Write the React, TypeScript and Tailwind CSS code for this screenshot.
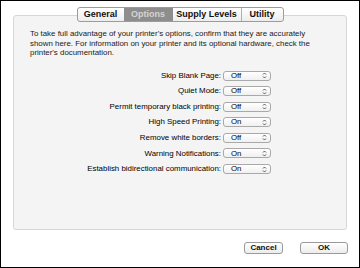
import React from 'react';

const options: { label: string; value: string }[] = [
  { label: 'Skip Blank Page:', value: 'Off' },
  { label: 'Quiet Mode:', value: 'Off' },
  { label: 'Permit temporary black printing:', value: 'Off' },
  { label: 'High Speed Printing:', value: 'On' },
  { label: 'Remove white borders:', value: 'Off' },
  { label: 'Warning Notifications:', value: 'On' },
  { label: 'Establish bidirectional communication:', value: 'On' },
];

const tabs = ['General', 'Options', 'Supply Levels', 'Utility'];

const Popup = ({ value }: { value: string }) => (
  <div className="w-[48px] h-[10px] flex items-center justify-between pl-[7px] pr-[3px] rounded-[3px] border border-[#a9a9a9] bg-gradient-to-b from-white to-[#f0f0f0] text-[7.8px] leading-none text-black">
    <span>{value}</span>
    <svg width="5" height="7" viewBox="0 0 5 7">
      <path d="M1 2.5 L2.5 1 L4 2.5" stroke="#444" strokeWidth="0.9" fill="none" />
      <path d="M1 4.5 L2.5 6 L4 4.5" stroke="#444" strokeWidth="0.9" fill="none" />
    </svg>
  </div>
);

const App = () => {
  return (
    <div
      className="w-[360px] h-[268px] border border-black bg-white flex flex-col"
      style={{ fontFamily: '"Liberation Sans", Arial, sans-serif' }}
    >
      <div className="mx-[12px] mt-[14px] h-[215px] rounded-[3px] border border-[#d6d6d6] bg-[#f4f4f4] flex flex-col">
        {/* tab strip */}
        <div className="-mt-[9px] flex justify-center">
          <div className="flex h-[15px] rounded-[3px] border border-[#9c9c9c] bg-gradient-to-b from-white to-[#ededed] overflow-hidden">
            {tabs.map((t, i) => (
              <div
                key={t}
                className={
                  t === 'Options'
                    ? 'h-full flex items-center justify-center w-[49px] bg-[#8d8d8d] text-[#d4d4d4] text-[9px] font-semibold'
                    : i === 0
                    ? 'h-full flex items-center justify-center w-[46px] text-[9px] font-semibold text-[#111]'
                    : t === 'Supply Levels'
                    ? 'h-full flex items-center justify-center w-[69px] border-r border-[#b0b0b0] text-[9px] font-semibold text-[#111]'
                    : 'h-full flex items-center justify-center w-[41px] text-[9px] font-semibold text-[#111]'
                }
              >
                {t}
              </div>
            ))}
          </div>
        </div>

        <p className="mt-[7px] ml-[16px] w-[292px] text-[7.9px] leading-[9.5px] text-[#1a1a1a]">
          To take full advantage of your printer's options, confirm that they are accurately shown here. For
          information on your printer and its optional hardware, check the printer's documentation.
        </p>

        <div className="mt-[13px] flex flex-col gap-[5.6px]">
          {options.map((o) => (
            <div key={o.label} className="flex items-center h-[10px]">
              <div className="w-[209px] text-right pr-[2px] text-[7.9px] leading-none text-black">
                {o.label}
              </div>
              <Popup value={o.value} />
            </div>
          ))}
        </div>
      </div>

      <div className="mt-[12px] flex justify-end gap-[17px] pr-[11px]">
        <button className="w-[39px] h-[12px] rounded-[3px] border border-[#9a9a9a] bg-gradient-to-b from-white to-[#ececec] text-[8px] leading-none font-semibold text-[#111]">
          Cancel
        </button>
        <button className="w-[48px] h-[12px] rounded-[3px] border border-[#9a9a9a] bg-gradient-to-b from-white to-[#ececec] text-[8px] leading-none font-semibold text-[#111]">
          OK
        </button>
      </div>
    </div>
  );
};

export default App;
